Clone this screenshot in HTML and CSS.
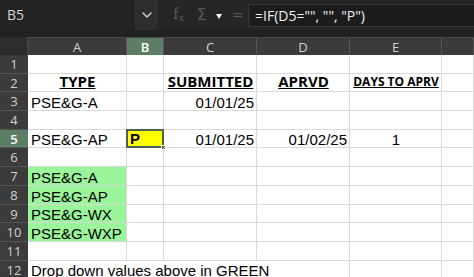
FILE: index.html
```html
<!DOCTYPE html>
<html>
<head>
<meta charset="utf-8">
<link rel="stylesheet" href="styles.css">
</head>
<body>
<div class="toolbar">
  <div class="namebox">B5</div>
  <div class="nb-drop">
    <svg width="12" height="8" viewBox="0 0 12 8"><path d="M2 2 L6 6 L10 2" fill="none" stroke="#cfcfcf" stroke-width="1.5" stroke-linecap="round" stroke-linejoin="round"/></svg>
  </div>
  <div class="tools">
    <span class="fx">f<sub>x</sub></span>
    <span class="sigma">Σ</span>
    <span class="tri"></span>
    <span class="eq">=</span>
  </div>
  <div class="formula">=IF(D5="", "", "P")</div>
</div>
<div class="band"></div>
<div class="sheet">
  <div class="corner"></div>
  <div class="ch">A</div><div class="ch sel">B</div><div class="ch">C</div><div class="ch">D</div><div class="ch">E</div><div class="ch"></div>

  <div class="rh">1</div><div class="c"></div><div class="c"></div><div class="c"></div><div class="c"></div><div class="c"></div><div class="c"></div>

  <div class="rh">2</div><div class="c hd center">TYPE</div><div class="c"></div><div class="c hd center">SUBMITTED</div><div class="c hd center">APRVD</div><div class="c hd small center">DAYS TO APRV</div><div class="c"></div>

  <div class="rh">3</div><div class="c">PSE&amp;G-A</div><div class="c"></div><div class="c right">01/01/25</div><div class="c"></div><div class="c"></div><div class="c"></div>

  <div class="rh">4</div><div class="c"></div><div class="c"></div><div class="c"></div><div class="c"></div><div class="c"></div><div class="c"></div>

  <div class="rh sel">5</div><div class="c">PSE&amp;G-AP</div><div class="c active"><span class="bold">P</span><span class="handle"></span></div><div class="c right">01/01/25</div><div class="c right">01/02/25</div><div class="c center">1</div><div class="c"></div>

  <div class="rh">6</div><div class="c"></div><div class="c"></div><div class="c"></div><div class="c"></div><div class="c"></div><div class="c"></div>

  <div class="rh">7</div><div class="c green">PSE&amp;G-A</div><div class="c"></div><div class="c"></div><div class="c"></div><div class="c"></div><div class="c"></div>

  <div class="rh">8</div><div class="c green">PSE&amp;G-AP</div><div class="c"></div><div class="c"></div><div class="c"></div><div class="c"></div><div class="c"></div>

  <div class="rh">9</div><div class="c green">PSE&amp;G-WX</div><div class="c"></div><div class="c"></div><div class="c"></div><div class="c"></div><div class="c"></div>

  <div class="rh">10</div><div class="c green">PSE&amp;G-WXP</div><div class="c"></div><div class="c"></div><div class="c"></div><div class="c"></div><div class="c"></div>

  <div class="rh">11</div><div class="c"></div><div class="c"></div><div class="c"></div><div class="c"></div><div class="c"></div><div class="c"></div>

  <div class="rh">12</div><div class="c span4">Drop down values above in GREEN</div><div class="c"></div><div class="c"></div>
</div>
</body>
</html>
```

FILE: styles.css
```css
* { box-sizing: border-box; }
html, body {
  margin: 0;
  padding: 0;
  width: 474px;
  height: 277px;
  overflow: hidden;
  background: #ffffff;
  font-family: "Liberation Sans", Arial, sans-serif;
}
.toolbar {
  height: 30px;
  display: flex;
  background: #262626;
}
.namebox {
  width: 135px;
  color: #d6d6d6;
  font-family: "Open Sans", sans-serif;
  font-size: 14px;
  padding-left: 7px;
  line-height: 29px;
  background: #242424;
}
.nb-drop {
  width: 23px;
  background: #2e2e2e;
  border-bottom-right-radius: 7px;
  border-left: 1px solid #333;
  display: flex;
  align-items: center;
  justify-content: center;
}
.tools {
  width: 90px;
  display: flex;
  align-items: center;
  padding-left: 15px;
  color: #555;
  font-family: "DejaVu Sans", sans-serif;
}
.fx {
  font-family: "Liberation Serif", serif;
  font-size: 17px;
  color: #5a5a5a;
  width: 24px;
  line-height: 20px;
}
.fx sub { font-size: 11px; vertical-align: -2px; }
.sigma {
  font-size: 15px;
  color: #5a5a5a;
  width: 19px;
}
.tri {
  width: 0;
  height: 0;
  border-left: 3.5px solid transparent;
  border-right: 3.5px solid transparent;
  border-top: 5px solid #ffffff;
  margin-right: 10px;
  margin-top: 3px;
}
.eq {
  font-size: 14px;
  color: #555;
}
.formula {
  flex: 1;
  margin: 4px 0 3px 0;
  background: #1c1c1c;
  border: 1px solid #383838;
  border-right: none;
  color: #f0f0f0;
  font-family: "Open Sans", sans-serif;
  font-size: 14px;
  line-height: 21px;
  padding-left: 6px;
}
.band {
  height: 7px;
  background: #222222;
}
.sheet {
  display: grid;
  grid-template-columns: 28px 99px 37px 93px 93px 92px 1fr;
  grid-template-rows: 18px repeat(12, 18.7px);
}
.corner {
  background: #2c2c2c;
  border-right: 1px solid #4a4a4a;
}
.ch {
  background: #3b3b3b;
  color: #d2d2d2;
  font-family: "Open Sans", sans-serif;
  font-size: 13px;
  text-align: center;
  line-height: 18px;
  border-right: 1px solid #555;
  border-top: 1px solid #4a4a4a;
}
.ch.sel {
  background: #5d7e66;
  color: #ffffff;
  font-weight: 600;
}
.rh {
  background: #3b3b3b;
  color: #d2d2d2;
  font-family: "Open Sans", sans-serif;
  font-size: 13px;
  text-align: center;
  line-height: 18px;
  border-bottom: 1px solid #555;
}
.rh.sel {
  background: #5d7e66;
  color: #ffffff;
  font-weight: 600;
}
.c {
  border-right: 1px solid #d9d9d9;
  border-bottom: 1px solid #d9d9d9;
  font-size: 15px;
  line-height: 15px;
  color: #000;
  display: flex;
  align-items: flex-end;
  padding: 0 2px 0 3px;
  white-space: nowrap;
  position: relative;
}
.c.right { justify-content: flex-end; }
.c.center { justify-content: center; }
.c.hd {
  font-family: "Open Sans", sans-serif;
  font-weight: 700;
  font-size: 15px;
  text-decoration: underline;
  text-underline-offset: 1px;
  padding-bottom: 2px;
}
.c.hd.small { font-size: 12px; }
.c.green { background: #9af59a; }
.c.active {
  background: #ffff00;
  border: 2px solid #4d6052;
  margin: -1px 0 0 -1px;
  padding-left: 2px;
}
.bold { font-weight: 700; }
.handle {
  position: absolute;
  right: -4px;
  bottom: -4px;
  width: 5px;
  height: 5px;
  background: #4d6052;
  border: 1px solid #ffffff;
}
.c.span4 {
  grid-column: 2 / 6;
}
```
